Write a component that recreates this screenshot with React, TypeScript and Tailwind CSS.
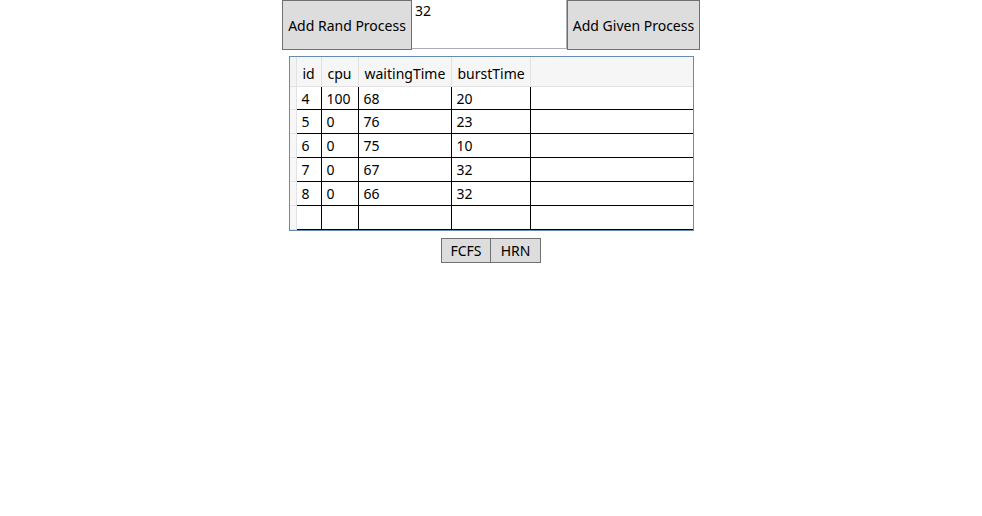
import React from "react";

const rows = [
  ["4", "100", "68", "20"],
  ["5", "0", "76", "23"],
  ["6", "0", "75", "10"],
  ["7", "0", "67", "32"],
  ["8", "0", "66", "32"],
  ["", "", "", ""],
];

const widths = ["w-[25px]", "w-[37px]", "w-[93px]", "w-[79px]"];
const headers = ["id", "cpu", "waitingTime", "burstTime"];

export default function App() {
  return (
    <div
      className="w-[982px] h-[516px] bg-white flex flex-col items-center text-black"
      style={{ fontFamily: '"Segoe UI", "Noto Sans", "Open Sans", sans-serif' }}
    >
      <div className="flex w-[418px] h-[50px]">
        <button className="w-[130px] h-[50px] bg-[#dddddd] border border-[#707070] text-[14px] flex items-center justify-center pt-[1px]">
          Add Rand Process
        </button>
        <div className="w-[155px] h-[49px] bg-white border-b border-r border-[#abadb3] px-[3px] pt-[1px] text-[14px] leading-[20px]">
          32
        </div>
        <button className="w-[133px] h-[50px] bg-[#dddddd] border border-[#707070] text-[14px] flex items-center justify-center pt-[1px]">
          Add Given Process
        </button>
      </div>

      <div className="mt-[6px] w-[405px] h-[175px] border border-[#688caf] bg-white flex flex-col text-[14px]">
        <div className="flex h-[30px]">
          <div className="w-[7px] h-full bg-[#f3f3f3] border-r border-b border-[#e2e2e2]" />
          {headers.map((h, i) => (
            <div
              key={h}
              className={`${widths[i]} h-full bg-[#f6f6f6] border-r border-b border-[#e2e2e2] pl-[6px] pt-[3px] flex items-center`}
            >
              {h}
            </div>
          ))}
          <div className="flex-1 h-full bg-[#f6f6f6] border-b border-[#e2e2e2]" />
        </div>
        {rows.map((r, ri) => (
          <div key={ri} className={`flex ${ri === 0 ? "h-[23px]" : "h-[24px]"}`}>
            <div className="w-[7px] h-full bg-[#f7f7f7] border-r border-b border-[#e2e2e2]" />
            {r.map((c, ci) => (
              <div
                key={ci}
                className={`${widths[ci]} h-full border-r border-b border-black pl-[5px] flex items-center`}
              >
                {c}
              </div>
            ))}
            <div className="flex-1 h-full border-b border-black" />
          </div>
        ))}
      </div>

      <div className="mt-[7px] flex h-[25px]">
        <button className="w-[50px] h-[25px] bg-[#dddddd] border border-[#707070] text-[14px] flex items-center justify-center">
          FCFS
        </button>
        <button className="w-[50px] h-[25px] bg-[#dddddd] border border-l-0 border-[#707070] text-[14px] flex items-center justify-center">
          HRN
        </button>
      </div>
    </div>
  );
}
